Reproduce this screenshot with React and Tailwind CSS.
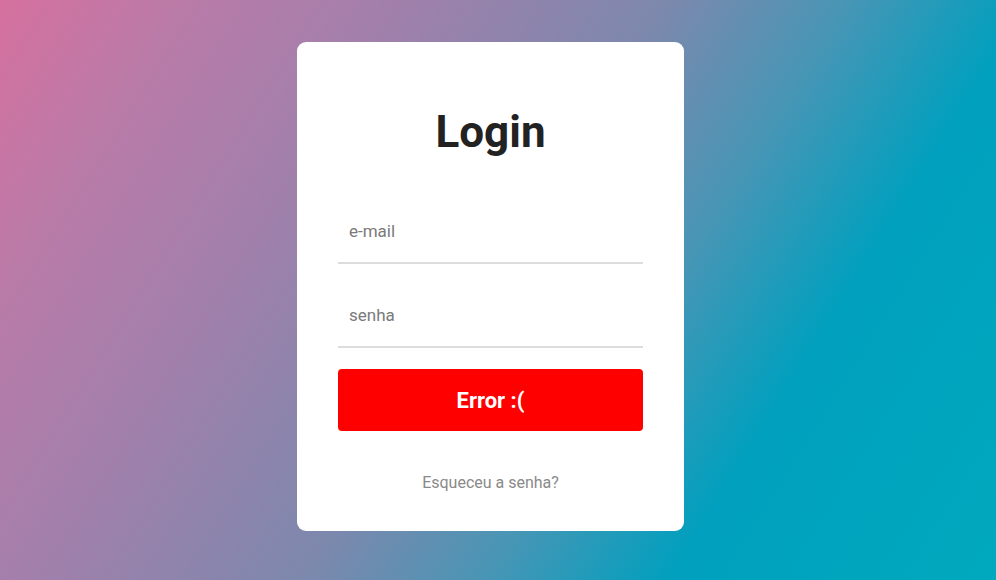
export default function App() {
  return (
    <div className="w-full h-[580px] flex justify-center pr-[15px] bg-[linear-gradient(122deg,#d5709e_0%,#b97ba8_14%,#a57fab_27%,#7d88ad_49%,#4a95b5_62%,#00a0be_76%,#00a9bd_100%)] font-['Roboto',_'Liberation_Sans',_sans-serif]">
      <div className="mt-[42px] w-[387px] h-[489px] bg-white rounded-[9px] flex flex-col items-center px-[41px]">
        <h1 className="mt-[64px] text-[44px] leading-[52px] font-bold text-[#222]">Login</h1>
        <div className="w-full mt-[42px] flex flex-col">
          <input
            className="w-full h-[64px] px-[11px] text-[17px] text-[#333] placeholder:text-[#7a7a7a] border-b-2 border-[#dcdcdc] outline-none bg-transparent"
            placeholder="e-mail"
          />
          <input
            type="password"
            className="w-full mt-[20px] h-[64px] px-[11px] text-[17px] text-[#333] placeholder:text-[#7a7a7a] border-b-2 border-[#dcdcdc] outline-none bg-transparent"
            placeholder="senha"
          />
          <button className="mt-[21px] w-full h-[62px] bg-[#ff0000] rounded-[4px] text-white text-[22px] font-bold">
            Error :(
          </button>
        </div>
        <a className="mt-[40px] text-[16px] text-[#8a8a8a]">Esqueceu a senha?</a>
      </div>
    </div>
  );
}
